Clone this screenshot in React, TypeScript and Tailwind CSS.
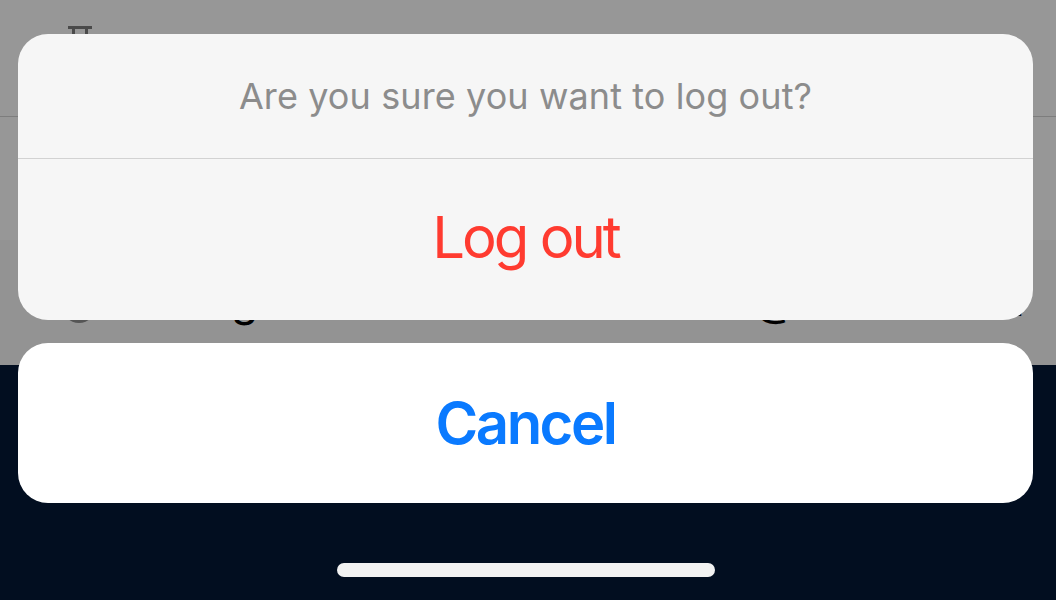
import React from "react";

export default function App() {
  return (
    <div className="relative w-[1056px] h-[600px] overflow-hidden" style={{ fontFamily: "Inter, 'Liberation Sans', sans-serif" }}>
      {/* Dimmed background page */}
      <div className="flex flex-col h-full">
        <div className="h-[116px] bg-[#979797] px-[68px] pt-[26px]">
          <div className="w-[24px] flex flex-col">
            <div className="h-[3px] bg-[#4a4a4a]" />
            <div className="flex justify-between px-[4px]">
              <div className="w-[3px] h-[8px] bg-[#4a4a4a]" />
              <div className="w-[3px] h-[8px] bg-[#4a4a4a]" />
            </div>
          </div>
        </div>
        <div className="h-px bg-[#7d7d7d]" />
        <div className="h-[123px] bg-[#979797]" />
        <div className="h-[125px] bg-[#939393] flex items-end pb-[43px] pl-[62px] gap-[20px]">
          <div className="w-[34px] h-[34px] rounded-full bg-[#555555] -mb-[1px]" />
          <div className="text-[44px] leading-none text-black whitespace-nowrap">Manage account seanmartin01@icloud.com</div>
        </div>
        <div className="flex-1 bg-[#020e20]" />
      </div>

      {/* Action sheet overlay */}
      <div className="absolute inset-0 flex flex-col pl-[18px] pt-[34px] pr-[23px]">
        <div className="h-[286px] rounded-[30px] bg-[#f6f6f6] flex flex-col overflow-hidden">
          <div className="h-[124px] flex items-center justify-center text-[36px] text-[#8c8c8c] tracking-[0.1px]">
            Are you sure you want to log out?
          </div>
          <div className="h-px bg-[#d2d2d2]" />
          <div className="flex-1 flex items-center justify-center text-[58px] text-[#ff3b30] tracking-[-3px] pb-[4px]">
            Log out
          </div>
        </div>
        <div className="mt-[23px] h-[160px] rounded-[30px] bg-white flex items-center justify-center text-[58px] font-semibold text-[#0a7aff] tracking-[-2.5px]">
          Cancel
        </div>
        <div className="flex justify-center mt-[60px]">
          <div className="w-[378px] h-[14px] rounded-full bg-[#f2f2f2]" />
        </div>
      </div>
    </div>
  );
}
